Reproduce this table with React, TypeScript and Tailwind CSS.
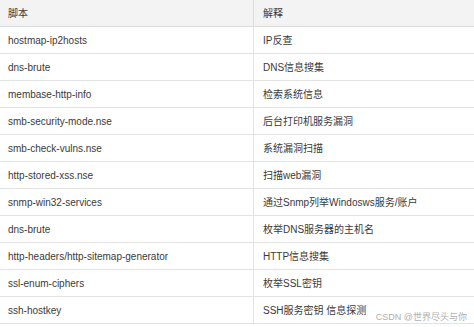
import React from "react";

const rows: [string, string][] = [
  ["hostmap-ip2hosts", "IP反查"],
  ["dns-brute", "DNS信息搜集"],
  ["membase-http-info", "检索系统信息"],
  ["smb-security-mode.nse", "后台打印机服务漏洞"],
  ["smb-check-vulns.nse", "系统漏洞扫描"],
  ["http-stored-xss.nse", "扫描web漏洞"],
  ["snmp-win32-services", "通过Snmp列举Windosws服务/账户"],
  ["dns-brute", "枚举DNS服务器的主机名"],
  ["http-headers/http-sitemap-generator", "HTTP信息搜集"],
  ["ssl-enum-ciphers", "枚举SSL密钥"],
  ["ssh-hostkey", "SSH服务密钥 信息探测"],
];

const font = {
  fontFamily: '"Liberation Sans", Arial, "Noto Sans CJK SC", sans-serif',
};

const App = () => {
  return (
    <div
      className="relative w-[474px] h-[327px] overflow-hidden bg-white text-[10px] text-[#3a3a3a]"
      style={font}
    >
      <div className="grid grid-cols-[254px_1fr]">
        {/* header */}
        <div className="h-[27px] flex items-center pl-2 bg-[#f3f3f3] border-r border-b border-[#dcdcdc]">
          脚本
        </div>
        <div className="h-[27px] flex items-center pl-[9px] bg-[#f3f3f3] border-b border-[#dcdcdc]">
          解释
        </div>

        {rows.map(([script, desc], i) => (
          <React.Fragment key={i}>
            <div className="h-[27px] flex items-center pl-2 border-r border-b border-[#e3e3e3]">
              {script}
            </div>
            <div className="h-[27px] flex items-center pl-[9px] border-b border-[#e3e3e3]">
              {desc}
            </div>
          </React.Fragment>
        ))}
      </div>

      <div className="absolute right-[7px] bottom-[3px] text-[9px] text-[#b0b0b0]">
        CSDN @世界尽头与你
      </div>
    </div>
  );
};

export default App;
